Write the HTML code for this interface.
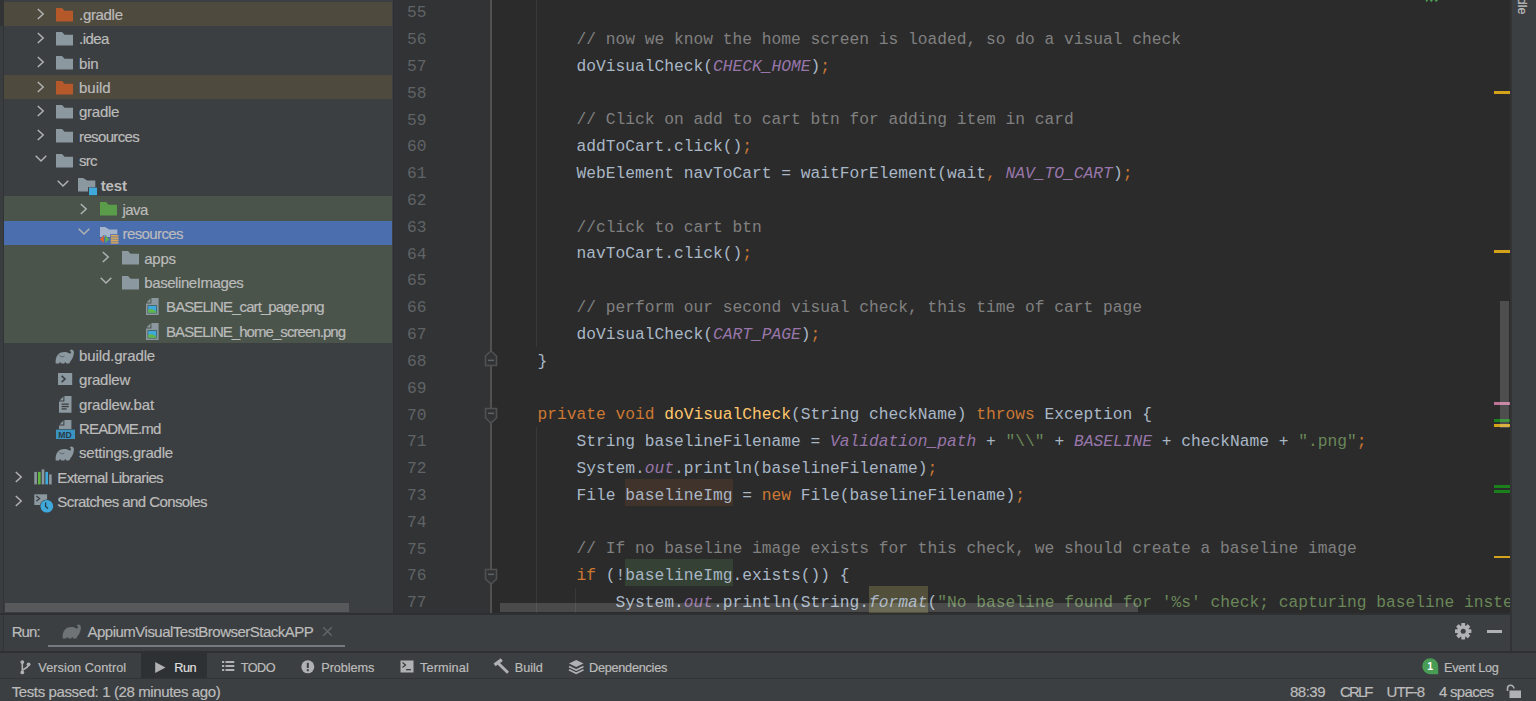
<!DOCTYPE html><html><head><meta charset="utf-8"><style>
html,body{margin:0;padding:0;}
body{width:1536px;height:701px;overflow:hidden;position:relative;background:#3C3F41;font-family:"Liberation Sans",sans-serif;}
.r{position:absolute;}
.t{position:absolute;white-space:pre;line-height:16px;-webkit-text-stroke:0.2px currentColor;}
.code{position:absolute;white-space:pre;font-family:"Liberation Mono",monospace;font-size:16.25px;line-height:26.82px;color:#A9B7C6;}
.k{color:#CC7832}.c{color:#808080}.s{color:#6A8759}.f{color:#9876AA;font-style:italic}.m{color:#FFC66D}.i{font-style:italic}
</style></head><body>

<div class="r" style="left:0.00px;top:0.00px;width:393.30px;height:614.00px;background:#3C3F41;"></div>
<div class="r" style="left:0.00px;top:0.00px;width:3.20px;height:651.00px;background:#3A3D3F;"></div>
<div class="r" style="left:0.00px;top:0.00px;width:3.20px;height:25.70px;background:#313335;"></div>
<div class="r" style="left:3.20px;top:0.00px;width:1.00px;height:651.00px;background:#323436;"></div>
<div class="r" style="left:4.20px;top:1.50px;width:387.90px;height:24.38px;background:#4E4A3E;"></div>
<div class="r" style="left:4.20px;top:74.58px;width:387.90px;height:24.38px;background:#4E4A3E;"></div>
<div class="r" style="left:4.20px;top:196.38px;width:387.90px;height:24.38px;background:#4A544A;"></div>
<div class="r" style="left:4.20px;top:220.74px;width:387.90px;height:24.38px;background:#4B6EAF;"></div>
<div class="r" style="left:4.20px;top:245.10px;width:387.90px;height:24.38px;background:#4A544A;"></div>
<div class="r" style="left:4.20px;top:269.46px;width:387.90px;height:24.38px;background:#4A544A;"></div>
<div class="r" style="left:4.20px;top:293.82px;width:387.90px;height:24.38px;background:#4A544A;"></div>
<div class="r" style="left:4.20px;top:318.18px;width:387.90px;height:24.38px;background:#4A544A;"></div>
<svg class="r" style="left:35.85px;top:6.68px" width="10.00" height="14.00" viewBox="0 0 10.00 14.00"><polyline points="1.8,2 7.2,7 1.8,12" fill="none" stroke="#AFB1B3" stroke-width="1.5"/></svg>
<svg class="r" style="left:56.40px;top:7.58px" width="18.00" height="14.00" viewBox="0 0 18.00 14.00"><path d="M0 0 H6 L8.6 2.7 H17 V13.4 H0 Z" fill="#B5592B"/></svg>
<div class="t" style="left:79.05px;top:6.98px;font-size:15.00px;color:#BBBBBB;letter-spacing:-0.323px;">.gradle</div>
<svg class="r" style="left:35.85px;top:31.04px" width="10.00" height="14.00" viewBox="0 0 10.00 14.00"><polyline points="1.8,2 7.2,7 1.8,12" fill="none" stroke="#AFB1B3" stroke-width="1.5"/></svg>
<svg class="r" style="left:56.40px;top:31.94px" width="18.00" height="14.00" viewBox="0 0 18.00 14.00"><path d="M0 0 H6 L8.6 2.7 H17 V13.4 H0 Z" fill="#8C98A0"/></svg>
<div class="t" style="left:79.05px;top:31.34px;font-size:15.00px;color:#BBBBBB;letter-spacing:-0.585px;">.idea</div>
<svg class="r" style="left:35.85px;top:55.40px" width="10.00" height="14.00" viewBox="0 0 10.00 14.00"><polyline points="1.8,2 7.2,7 1.8,12" fill="none" stroke="#AFB1B3" stroke-width="1.5"/></svg>
<svg class="r" style="left:56.40px;top:56.30px" width="18.00" height="14.00" viewBox="0 0 18.00 14.00"><path d="M0 0 H6 L8.6 2.7 H17 V13.4 H0 Z" fill="#8C98A0"/></svg>
<div class="t" style="left:79.05px;top:55.70px;font-size:15.00px;color:#BBBBBB;letter-spacing:-0.205px;">bin</div>
<svg class="r" style="left:35.85px;top:79.76px" width="10.00" height="14.00" viewBox="0 0 10.00 14.00"><polyline points="1.8,2 7.2,7 1.8,12" fill="none" stroke="#AFB1B3" stroke-width="1.5"/></svg>
<svg class="r" style="left:56.40px;top:80.66px" width="18.00" height="14.00" viewBox="0 0 18.00 14.00"><path d="M0 0 H6 L8.6 2.7 H17 V13.4 H0 Z" fill="#B5592B"/></svg>
<div class="t" style="left:79.05px;top:80.06px;font-size:15.00px;color:#BBBBBB;letter-spacing:-0.038px;">build</div>
<svg class="r" style="left:35.85px;top:104.12px" width="10.00" height="14.00" viewBox="0 0 10.00 14.00"><polyline points="1.8,2 7.2,7 1.8,12" fill="none" stroke="#AFB1B3" stroke-width="1.5"/></svg>
<svg class="r" style="left:56.40px;top:105.02px" width="18.00" height="14.00" viewBox="0 0 18.00 14.00"><path d="M0 0 H6 L8.6 2.7 H17 V13.4 H0 Z" fill="#8C98A0"/></svg>
<div class="t" style="left:79.05px;top:104.42px;font-size:15.00px;color:#BBBBBB;letter-spacing:-0.282px;">gradle</div>
<svg class="r" style="left:35.85px;top:128.48px" width="10.00" height="14.00" viewBox="0 0 10.00 14.00"><polyline points="1.8,2 7.2,7 1.8,12" fill="none" stroke="#AFB1B3" stroke-width="1.5"/></svg>
<svg class="r" style="left:56.40px;top:129.38px" width="18.00" height="14.00" viewBox="0 0 18.00 14.00"><path d="M0 0 H6 L8.6 2.7 H17 V13.4 H0 Z" fill="#8C98A0"/></svg>
<div class="t" style="left:79.05px;top:128.78px;font-size:15.00px;color:#BBBBBB;letter-spacing:-0.639px;">resources</div>
<svg class="r" style="left:33.85px;top:154.24px" width="14.00" height="10.00" viewBox="0 0 14.00 10.00"><polyline points="1.7,1.8 7,7 12.3,1.8" fill="none" stroke="#AFB1B3" stroke-width="1.5"/></svg>
<svg class="r" style="left:56.40px;top:153.74px" width="18.00" height="14.00" viewBox="0 0 18.00 14.00"><path d="M0 0 H6 L8.6 2.7 H17 V13.4 H0 Z" fill="#8C98A0"/></svg>
<div class="t" style="left:79.05px;top:153.14px;font-size:15.00px;color:#BBBBBB;letter-spacing:-0.765px;">src</div>
<svg class="r" style="left:55.60px;top:178.60px" width="14.00" height="10.00" viewBox="0 0 14.00 10.00"><polyline points="1.7,1.8 7,7 12.3,1.8" fill="none" stroke="#AFB1B3" stroke-width="1.5"/></svg>
<svg class="r" style="left:76.80px;top:177.20px" width="20.00" height="12.00" viewBox="0 0 20.00 12.00"></svg>
<svg class="r" style="left:77.80px;top:177.90px" width="20.00" height="18.00" viewBox="0 0 20.00 18.00"><path d="M0 0 H5.2 L9.1 2.5 H17.3 V9.3 H10 V13.4 H0 Z" fill="#8C98A0"/><rect x="11" y="9.6" width="8" height="7.6" fill="#3FA9DB"/></svg>
<div class="t" style="left:100.80px;top:177.50px;font-size:15.00px;color:#BBBBBB;letter-spacing:-0.193px;font-weight:bold;-webkit-text-stroke:0;">test</div>
<svg class="r" style="left:79.35px;top:201.56px" width="10.00" height="14.00" viewBox="0 0 10.00 14.00"><polyline points="1.8,2 7.2,7 1.8,12" fill="none" stroke="#AFB1B3" stroke-width="1.5"/></svg>
<svg class="r" style="left:99.90px;top:202.46px" width="18.00" height="14.00" viewBox="0 0 18.00 14.00"><path d="M0 0 H6 L8.6 2.7 H17 V13.4 H0 Z" fill="#5A9C49"/></svg>
<div class="t" style="left:122.55px;top:201.86px;font-size:15.00px;color:#BBBBBB;letter-spacing:-0.604px;">java</div>
<svg class="r" style="left:77.35px;top:227.32px" width="14.00" height="10.00" viewBox="0 0 14.00 10.00"><polyline points="1.7,1.8 7,7 12.3,1.8" fill="none" stroke="#AFB1B3" stroke-width="1.5"/></svg>
<svg class="r" style="left:98.55px;top:226.62px" width="21.00" height="18.00" viewBox="0 0 21.00 18.00"><path d="M1 0 H6.2 L10.1 2.5 H18.3 V7.2 H11 V10 H1 Z" fill="#A3B3CB"/><path d="M5 8 L0.7 12.2 L5 16.4 Z" fill="#E5622A" stroke="#4B6EAF" stroke-width="0.5"/><path d="M6 8 L10.3 12.2 L6 16.4 Z" fill="#5FB347" stroke="#4B6EAF" stroke-width="0.5"/><rect x="11.8" y="8" width="7.6" height="8.4" fill="#8A8F8F"/><rect x="11.8" y="8" width="7.6" height="1.3" fill="#D9A35A"/><rect x="11.8" y="10.6" width="7.6" height="1.3" fill="#D9A35A"/><rect x="11.8" y="12.8" width="7.6" height="1.3" fill="#D9A35A"/><rect x="11.8" y="15.3" width="7.6" height="1.3" fill="#D9A35A"/></svg>
<div class="t" style="left:122.55px;top:226.22px;font-size:15.00px;color:#BBBBBB;letter-spacing:-0.606px;">resources</div>
<svg class="r" style="left:101.10px;top:250.28px" width="10.00" height="14.00" viewBox="0 0 10.00 14.00"><polyline points="1.8,2 7.2,7 1.8,12" fill="none" stroke="#AFB1B3" stroke-width="1.5"/></svg>
<svg class="r" style="left:121.65px;top:251.18px" width="18.00" height="14.00" viewBox="0 0 18.00 14.00"><path d="M0 0 H6 L8.6 2.7 H17 V13.4 H0 Z" fill="#8C98A0"/></svg>
<div class="t" style="left:144.30px;top:250.58px;font-size:15.00px;color:#BBBBBB;letter-spacing:-0.281px;">apps</div>
<svg class="r" style="left:99.10px;top:276.04px" width="14.00" height="10.00" viewBox="0 0 14.00 10.00"><polyline points="1.7,1.8 7,7 12.3,1.8" fill="none" stroke="#AFB1B3" stroke-width="1.5"/></svg>
<svg class="r" style="left:121.65px;top:275.54px" width="18.00" height="14.00" viewBox="0 0 18.00 14.00"><path d="M0 0 H6 L8.6 2.7 H17 V13.4 H0 Z" fill="#8C98A0"/></svg>
<div class="t" style="left:144.30px;top:274.94px;font-size:15.00px;color:#BBBBBB;letter-spacing:-0.426px;">baselineImages</div>
<svg class="r" style="left:146.35px;top:298.40px" width="14.00" height="18.00" viewBox="0 0 14.00 18.00"><path d="M5.4 0 H12.6 V17 H0 V5.4 H5.4 Z" fill="#8C98A0"/><path d="M4.4 0.6 V4.4 H0.6 Z" fill="#8C98A0"/><rect x="1.6" y="7.2" width="9.4" height="8.2" fill="#3B4A45"/><rect x="2.2" y="7.8" width="8.2" height="7" fill="#3FA9DB"/><path d="M2.2 14.8 V12 Q5 10 10.4 13.4 V14.8 Z" fill="#62B543"/></svg>
<div class="t" style="left:166.05px;top:299.30px;font-size:15.00px;color:#BBBBBB;letter-spacing:-0.910px;">BASELINE_cart_page.png</div>
<svg class="r" style="left:146.35px;top:322.76px" width="14.00" height="18.00" viewBox="0 0 14.00 18.00"><path d="M5.4 0 H12.6 V17 H0 V5.4 H5.4 Z" fill="#8C98A0"/><path d="M4.4 0.6 V4.4 H0.6 Z" fill="#8C98A0"/><rect x="1.6" y="7.2" width="9.4" height="8.2" fill="#3B4A45"/><rect x="2.2" y="7.8" width="8.2" height="7" fill="#3FA9DB"/><path d="M2.2 14.8 V12 Q5 10 10.4 13.4 V14.8 Z" fill="#62B543"/></svg>
<div class="t" style="left:166.05px;top:323.66px;font-size:15.00px;color:#BBBBBB;letter-spacing:-0.949px;">BASELINE_home_screen.png</div>
<svg class="r" style="left:54.55px;top:348.52px" width="20.00" height="16.00" viewBox="0 0 20.00 16.00"><path d="M0.7 14.5 C0.4 10 1.6 5 6 3.6 C9 2.6 12 3 14 4.3 C14.9 4.7 15.8 4.4 16.1 3.7 C16.3 3.1 15.8 2.6 15.3 2.6 C14.6 1.4 15.4 0.6 16.5 0.6 C18.6 0.7 19.4 3 18.6 6 C17.9 9 16.6 10.8 15.6 12 L14.2 14.5 L11.3 14.5 C11 13.2 9.9 12.8 9.3 14.5 L6.3 14.5 C6 13.2 4.7 12.8 4.1 14.5 Z" fill="#8C98A0"/><path d="M4.5 6 C5.5 8 7 8.5 9.5 7" fill="none" stroke="#3C3F41" stroke-width="0.8" opacity="0.7"/></svg>
<div class="t" style="left:79.05px;top:348.02px;font-size:15.00px;color:#BBBBBB;letter-spacing:-0.129px;">build.gradle</div>
<svg class="r" style="left:57.65px;top:373.28px" width="15.00" height="13.00" viewBox="0 0 15.00 13.00"><rect x="0" y="0" width="14.2" height="12" fill="#8C98A0"/><polyline points="3.6,2.8 7,6 3.6,9.2" fill="none" stroke="#3C3F41" stroke-width="1.6"/></svg>
<div class="t" style="left:79.05px;top:372.38px;font-size:15.00px;color:#BBBBBB;letter-spacing:-0.218px;">gradlew</div>
<svg class="r" style="left:58.75px;top:396.04px" width="13.00" height="17.00" viewBox="0 0 13.00 17.00"><path d="M5.4 0 H12.5 V16.8 H0 V5.4 H5.4 Z" fill="#8C98A0"/><path d="M4.4 0.6 V4.4 H0.6 Z" fill="#8C98A0"/><rect x="2.6" y="7.5" width="7.2" height="1.3" fill="#3C3F41"/><rect x="2.6" y="9.9" width="7.2" height="1.3" fill="#3C3F41"/><rect x="2.6" y="12.3" width="5" height="1.3" fill="#3C3F41"/></svg>
<div class="t" style="left:79.05px;top:396.74px;font-size:15.00px;color:#BBBBBB;letter-spacing:-0.165px;">gradlew.bat</div>
<svg class="r" style="left:55.75px;top:420.00px" width="20.00" height="19.00" viewBox="0 0 20.00 19.00"><path d="M8.4 0 H15.4 V9 H3 V5.4 H8.4 Z" fill="#8C98A0"/><path d="M7.4 0.6 V4.4 H3.6 Z" fill="#8C98A0"/><rect x="0" y="9.6" width="19" height="9.4" fill="#3A93C0"/><text x="2.3" y="17.6" font-family="Liberation Sans" font-size="8.6" font-weight="bold" fill="#2B3A45">MD</text></svg>
<div class="t" style="left:79.05px;top:421.10px;font-size:15.00px;color:#BBBBBB;letter-spacing:-0.876px;">README.md</div>
<svg class="r" style="left:54.55px;top:445.96px" width="20.00" height="16.00" viewBox="0 0 20.00 16.00"><path d="M0.7 14.5 C0.4 10 1.6 5 6 3.6 C9 2.6 12 3 14 4.3 C14.9 4.7 15.8 4.4 16.1 3.7 C16.3 3.1 15.8 2.6 15.3 2.6 C14.6 1.4 15.4 0.6 16.5 0.6 C18.6 0.7 19.4 3 18.6 6 C17.9 9 16.6 10.8 15.6 12 L14.2 14.5 L11.3 14.5 C11 13.2 9.9 12.8 9.3 14.5 L6.3 14.5 C6 13.2 4.7 12.8 4.1 14.5 Z" fill="#8C98A0"/><path d="M4.5 6 C5.5 8 7 8.5 9.5 7" fill="none" stroke="#3C3F41" stroke-width="0.8" opacity="0.7"/></svg>
<div class="t" style="left:79.05px;top:445.46px;font-size:15.00px;color:#BBBBBB;letter-spacing:-0.250px;">settings.gradle</div>
<svg class="r" style="left:14.10px;top:469.52px" width="10.00" height="14.00" viewBox="0 0 10.00 14.00"><polyline points="1.8,2 7.2,7 1.8,12" fill="none" stroke="#AFB1B3" stroke-width="1.5"/></svg>
<svg class="r" style="left:33.80px;top:468.52px" width="19.00" height="16.00" viewBox="0 0 19.00 16.00"><rect x="0.3" y="2.9" width="2.6" height="12.5" fill="#8C98A0"/><rect x="4" y="2.9" width="2.6" height="12.5" fill="#62B543"/><rect x="7.7" y="0.4" width="2.6" height="15" fill="#8C98A0"/><rect x="11.4" y="2.9" width="2.6" height="12.5" fill="#3FA9DB"/><rect x="15.1" y="5.4" width="2.6" height="10" fill="#8C98A0"/></svg>
<div class="t" style="left:57.30px;top:469.82px;font-size:15.00px;color:#BBBBBB;letter-spacing:-0.612px;">External Libraries</div>
<svg class="r" style="left:14.10px;top:493.88px" width="10.00" height="14.00" viewBox="0 0 10.00 14.00"><polyline points="1.8,2 7.2,7 1.8,12" fill="none" stroke="#AFB1B3" stroke-width="1.5"/></svg>
<svg class="r" style="left:33.80px;top:493.58px" width="21.00" height="20.00" viewBox="0 0 21.00 20.00"><rect x="0.3" y="0.3" width="12.8" height="10.7" fill="#8C98A0"/><polyline points="2.3,2 5.6,4.6 2.3,7.2" fill="none" stroke="#3C3F41" stroke-width="1.3"/><circle cx="12.8" cy="12.3" r="6.9" fill="#3C3F41"/><circle cx="12.8" cy="12.3" r="6.3" fill="#3FA9DB"/><path d="M11.6 8.6 V12.5 L14 14.6" fill="none" stroke="#2B3A45" stroke-width="1.3"/></svg>
<div class="t" style="left:57.30px;top:494.18px;font-size:15.00px;color:#BBBBBB;letter-spacing:-0.586px;">Scratches and Consoles</div>
<div class="r" style="left:5.40px;top:603.30px;width:344.00px;height:8.80px;background:#58595A;"></div>
<div class="r" style="left:393.30px;top:0.00px;width:1.00px;height:613.00px;background:#2E3032;"></div>
<div class="r" style="left:394.30px;top:0.00px;width:1115.70px;height:612.80px;background:#2B2B2B;"></div>
<div class="r" style="left:394.30px;top:0.00px;width:95.70px;height:612.80px;background:#313335;"></div>
<div class="r" style="left:490.00px;top:0.00px;width:2.20px;height:612.80px;background:#515151;"></div>
<div class="code" style="left:366.50px;top:0.35px;width:60px;text-align:right;color:#606366">55</div>
<div class="code" style="left:366.50px;top:27.15px;width:60px;text-align:right;color:#606366">56</div>
<div class="code" style="left:366.50px;top:53.97px;width:60px;text-align:right;color:#606366">57</div>
<div class="code" style="left:366.50px;top:80.77px;width:60px;text-align:right;color:#606366">58</div>
<div class="code" style="left:366.50px;top:107.58px;width:60px;text-align:right;color:#606366">59</div>
<div class="code" style="left:366.50px;top:134.39px;width:60px;text-align:right;color:#606366">60</div>
<div class="code" style="left:366.50px;top:161.20px;width:60px;text-align:right;color:#606366">61</div>
<div class="code" style="left:366.50px;top:188.01px;width:60px;text-align:right;color:#606366">62</div>
<div class="code" style="left:366.50px;top:214.82px;width:60px;text-align:right;color:#606366">63</div>
<div class="code" style="left:366.50px;top:241.63px;width:60px;text-align:right;color:#606366">64</div>
<div class="code" style="left:366.50px;top:268.44px;width:60px;text-align:right;color:#606366">65</div>
<div class="code" style="left:366.50px;top:295.25px;width:60px;text-align:right;color:#606366">66</div>
<div class="code" style="left:366.50px;top:322.06px;width:60px;text-align:right;color:#606366">67</div>
<div class="code" style="left:366.50px;top:348.88px;width:60px;text-align:right;color:#606366">68</div>
<div class="code" style="left:366.50px;top:375.69px;width:60px;text-align:right;color:#606366">69</div>
<div class="code" style="left:366.50px;top:402.50px;width:60px;text-align:right;color:#606366">70</div>
<div class="code" style="left:366.50px;top:429.31px;width:60px;text-align:right;color:#606366">71</div>
<div class="code" style="left:366.50px;top:456.12px;width:60px;text-align:right;color:#606366">72</div>
<div class="code" style="left:366.50px;top:482.93px;width:60px;text-align:right;color:#606366">73</div>
<div class="code" style="left:366.50px;top:509.73px;width:60px;text-align:right;color:#606366">74</div>
<div class="code" style="left:366.50px;top:536.54px;width:60px;text-align:right;color:#606366">75</div>
<div class="code" style="left:366.50px;top:563.36px;width:60px;text-align:right;color:#606366">76</div>
<div class="code" style="left:366.50px;top:590.16px;width:60px;text-align:right;color:#606366">77</div>
<div class="r" style="left:625.25px;top:479.03px;width:107.25px;height:26.81px;background:#40332B;"></div>
<div class="r" style="left:625.25px;top:559.45px;width:107.25px;height:26.81px;background:#344134;"></div>
<div class="r" style="left:869.00px;top:586.26px;width:58.50px;height:26.81px;background:#52503A;"></div>
<div class="r" style="left:535.50px;top:0.00px;width:1.00px;height:346.67px;background:#393939;"></div>
<div class="r" style="left:535.50px;top:427.11px;width:1.00px;height:185.69px;background:#393939;"></div>
<div class="r" style="left:574.50px;top:587.96px;width:1.00px;height:24.84px;background:#393939;"></div>
<div class="code" style="left:537.50px;top:26.95px">    <span class="c">// now we know the home screen is loaded, so do a visual check</span></div>
<div class="code" style="left:537.50px;top:53.77px">    doVisualCheck(<span class="f">CHECK_HOME</span>)<span class="k">;</span></div>
<div class="code" style="left:537.50px;top:107.38px">    <span class="c">// Click on add to cart btn for adding item in card</span></div>
<div class="code" style="left:537.50px;top:134.19px">    addToCart.click()<span class="k">;</span></div>
<div class="code" style="left:537.50px;top:161.00px">    WebElement navToCart = waitForElement(wait<span class="k">, </span><span class="f">NAV_TO_CART</span>)<span class="k">;</span></div>
<div class="code" style="left:537.50px;top:214.62px">    <span class="c">//click to cart btn</span></div>
<div class="code" style="left:537.50px;top:241.44px">    navToCart.click()<span class="k">;</span></div>
<div class="code" style="left:537.50px;top:295.06px">    <span class="c">// perform our second visual check, this time of cart page</span></div>
<div class="code" style="left:537.50px;top:321.87px">    doVisualCheck(<span class="f">CART_PAGE</span>)<span class="k">;</span></div>
<div class="code" style="left:537.50px;top:348.68px">}</div>
<div class="code" style="left:537.50px;top:402.30px"><span class="k">private void </span><span class="m">doVisualCheck</span>(String checkName) <span class="k">throws </span>Exception {</div>
<div class="code" style="left:537.50px;top:429.11px">    String baselineFilename = <span class="f">Validation_path</span> + <span class="s">"\\"</span> + <span class="f">BASELINE</span> + checkName + <span class="s">".png"</span><span class="k">;</span></div>
<div class="code" style="left:537.50px;top:455.92px">    System.<span class="f">out</span>.println(baselineFilename)<span class="k">;</span></div>
<div class="code" style="left:537.50px;top:482.73px">    File baselineImg = <span class="k">new </span>File(baselineFilename)<span class="k">;</span></div>
<div class="code" style="left:537.50px;top:536.34px">    <span class="c">// If no baseline image exists for this check, we should create a baseline image</span></div>
<div class="code" style="left:537.50px;top:563.15px">    <span class="k">if </span>(!baselineImg.exists()) {</div>
<div class="code" style="left:537.50px;top:589.96px">        System.<span class="f">out</span>.println(String.<span class="i">format</span>(<span class="s">"No baseline found for '%s' check; capturing baseline instead"</span></div>
<svg class="r" style="left:484.00px;top:350.08px" width="14.00" height="17.00" viewBox="0 0 14.00 17.00"><path d="M1.5 15.5 V6 L7 1 L12.5 6 V15.5 Z" fill="#313335" stroke="#515151" stroke-width="1.6"/><rect x="4" y="9.6" width="6" height="1.5" fill="#606366"/></svg>
<svg class="r" style="left:484.00px;top:406.70px" width="14.00" height="17.00" viewBox="0 0 14.00 17.00"><path d="M1.5 1.5 V11 L7 16 L12.5 11 V1.5 Z" fill="#313335" stroke="#515151" stroke-width="1.6"/><rect x="4" y="5.6" width="6" height="1.5" fill="#606366"/></svg>
<svg class="r" style="left:484.00px;top:567.56px" width="14.00" height="17.00" viewBox="0 0 14.00 17.00"><path d="M1.5 1.5 V11 L7 16 L12.5 11 V1.5 Z" fill="#313335" stroke="#515151" stroke-width="1.6"/><rect x="4" y="5.6" width="6" height="1.5" fill="#606366"/></svg>
<div class="r" style="left:500.00px;top:603.20px;width:638.00px;height:9.20px;background:rgba(255,255,255,0.15);"></div>
<div class="r" style="left:1494.00px;top:91.00px;width:16.00px;height:2.50px;background:#D4A21B;"></div>
<div class="r" style="left:1494.00px;top:250.00px;width:16.00px;height:2.50px;background:#D4A21B;"></div>
<div class="r" style="left:1494.00px;top:402.10px;width:16.00px;height:2.50px;background:#BE7296;"></div>
<div class="r" style="left:1494.00px;top:419.20px;width:16.00px;height:2.50px;background:#1A801A;"></div>
<div class="r" style="left:1494.00px;top:424.20px;width:16.00px;height:2.50px;background:#D4A21B;"></div>
<div class="r" style="left:1494.00px;top:485.00px;width:16.00px;height:2.50px;background:#1A801A;"></div>
<div class="r" style="left:1494.00px;top:490.00px;width:16.00px;height:2.50px;background:#1A801A;"></div>
<div class="r" style="left:1494.00px;top:555.50px;width:16.00px;height:2.50px;background:#D4A21B;"></div>
<div class="r" style="left:1499.50px;top:301.30px;width:9.70px;height:126.50px;background:rgba(255,255,255,0.17);"></div>
<svg class="r" style="left:1424.00px;top:0.00px" width="16.00" height="4.00" viewBox="0 0 16.00 4.00"><path d="M1.5 0 L4.2 0 L2.6 2.2 Z" fill="#4A9C55"/><path d="M5.6 0 L9 0 L7.3 2.3 Z" fill="#4A9C55"/><path d="M10.5 0 L14 0 L12.2 2.3 Z" fill="#4A9C55"/></svg>
<div class="r" style="left:1510.00px;top:0.00px;width:2.00px;height:652.00px;background:#313335;"></div>
<div class="r" style="left:1512.00px;top:0.00px;width:24.00px;height:652.00px;background:#3C3F41;"></div>
<div class="t" style="left:1530px;top:-23px;font-size:12.5px;color:#BBBBBB;transform-origin:0 0;transform:rotate(90deg);">Gradle</div>
<div class="r" style="left:0.00px;top:612.80px;width:1510.00px;height:2.20px;background:#2E3032;"></div>
<div class="r" style="left:4.20px;top:615.00px;width:1505.80px;height:36.20px;background:#3C3F41;"></div>
<div class="t" style="left:11.70px;top:623.80px;font-size:15.00px;color:#BBBBBB;letter-spacing:-0.896px;">Run:</div>
<svg class="r" style="left:62.00px;top:623.50px" width="20.00" height="16.00" viewBox="0 0 20.00 16.00"><path d="M0.7 14.5 C0.4 10 1.6 5 6 3.6 C9 2.6 12 3 14 4.3 C14.9 4.7 15.8 4.4 16.1 3.7 C16.3 3.1 15.8 2.6 15.3 2.6 C14.6 1.4 15.4 0.6 16.5 0.6 C18.6 0.7 19.4 3 18.6 6 C17.9 9 16.6 10.8 15.6 12 L14.2 14.5 L11.3 14.5 C11 13.2 9.9 12.8 9.3 14.5 L6.3 14.5 C6 13.2 4.7 12.8 4.1 14.5 Z" fill="#6E7376"/></svg>
<div class="t" style="left:87.50px;top:623.80px;font-size:15.00px;color:#BBBBBB;letter-spacing:-0.506px;">AppiumVisualTestBrowserStackAPP</div>
<svg class="r" style="left:321.50px;top:626.00px" width="12.00" height="12.00" viewBox="0 0 12.00 12.00"><path d="M1.2 1.2 L9.8 9.8 M9.8 1.2 L1.2 9.8" stroke="#63676A" stroke-width="1.3"/></svg>
<div class="r" style="left:48.30px;top:644.70px;width:296.50px;height:2.80px;background:#747A80;"></div>
<svg class="r" style="left:1454.50px;top:622.50px" width="17.00" height="17.00" viewBox="0 0 17.00 17.00"><g transform="translate(8.2 8.2)" fill="#AFB1B3"><circle r="6"/><rect x="-1.9" y="-8.2" width="3.8" height="4" rx="0.6" transform="rotate(0)"/><rect x="-1.9" y="-8.2" width="3.8" height="4" rx="0.6" transform="rotate(45)"/><rect x="-1.9" y="-8.2" width="3.8" height="4" rx="0.6" transform="rotate(90)"/><rect x="-1.9" y="-8.2" width="3.8" height="4" rx="0.6" transform="rotate(135)"/><rect x="-1.9" y="-8.2" width="3.8" height="4" rx="0.6" transform="rotate(180)"/><rect x="-1.9" y="-8.2" width="3.8" height="4" rx="0.6" transform="rotate(225)"/><rect x="-1.9" y="-8.2" width="3.8" height="4" rx="0.6" transform="rotate(270)"/><rect x="-1.9" y="-8.2" width="3.8" height="4" rx="0.6" transform="rotate(315)"/><circle r="2.5" fill="#3C3F41"/></g></svg>
<div class="r" style="left:1487.20px;top:629.60px;width:14.80px;height:3.00px;background:#AFB1B3;"></div>
<div class="r" style="left:0.00px;top:651.20px;width:1536.00px;height:1.80px;background:#2E3032;"></div>
<div class="r" style="left:0.00px;top:653.00px;width:1536.00px;height:25.50px;background:#3C3F41;"></div>
<div class="r" style="left:141.40px;top:653.00px;width:65.60px;height:25.00px;background:#2E3133;"></div>
<div class="t" style="left:38.30px;top:660.10px;font-size:12.70px;color:#BBBBBB;letter-spacing:0.078px;">Version Control</div>
<svg class="r" style="left:18.00px;top:658.50px" width="14.00" height="16.00" viewBox="0 0 14.00 16.00"><circle cx="4.3" cy="3.1" r="1.9" fill="#AFB1B3"/><circle cx="4.3" cy="13.4" r="1.9" fill="#AFB1B3"/><circle cx="10.6" cy="5.3" r="1.9" fill="#AFB1B3"/><path d="M4.3 3 V13.4 M10.6 5.3 C10.6 9.2 6 9.2 4.3 11.5" fill="none" stroke="#AFB1B3" stroke-width="1.6"/></svg>
<svg class="r" style="left:153.50px;top:660.50px" width="13.00" height="13.00" viewBox="0 0 13.00 13.00"><path d="M1.2 1 L11.5 6.5 L1.2 12 Z" fill="#AFB1B3"/></svg>
<div class="t" style="left:174.20px;top:660.10px;font-size:12.70px;color:#DFDFDF;letter-spacing:-0.466px;">Run</div>
<svg class="r" style="left:221.00px;top:660.00px" width="15.00" height="13.00" viewBox="0 0 15.00 13.00"><rect x="1" y="1.0" width="2.2" height="2" fill="#AFB1B3"/><rect x="4.5" y="1.0" width="8.8" height="2" fill="#AFB1B3"/><rect x="1" y="5.0" width="2.2" height="2" fill="#AFB1B3"/><rect x="4.5" y="5.0" width="8.8" height="2" fill="#AFB1B3"/><rect x="1" y="9.0" width="2.2" height="2" fill="#AFB1B3"/><rect x="4.5" y="9.0" width="8.8" height="2" fill="#AFB1B3"/></svg>
<div class="t" style="left:240.70px;top:660.10px;font-size:12.70px;color:#BBBBBB;letter-spacing:-0.489px;">TODO</div>
<svg class="r" style="left:301.20px;top:659.50px" width="14.00" height="14.00" viewBox="0 0 14.00 14.00"><circle cx="6.8" cy="6.8" r="6.5" fill="#AFB1B3"/><rect x="5.8" y="2.8" width="2" height="5.2" fill="#3C3F41"/><rect x="5.8" y="9.2" width="2" height="2" fill="#3C3F41"/></svg>
<div class="t" style="left:321.30px;top:660.10px;font-size:12.70px;color:#BBBBBB;letter-spacing:-0.092px;">Problems</div>
<svg class="r" style="left:399.50px;top:659.50px" width="14.00" height="13.00" viewBox="0 0 14.00 13.00"><rect x="0.5" y="0.5" width="13" height="12" fill="#AFB1B3"/><polyline points="2.5,2.5 5.5,5 2.5,7.5" fill="none" stroke="#3C3F41" stroke-width="1.3"/><rect x="6" y="9" width="5" height="1.3" fill="#3C3F41"/></svg>
<div class="t" style="left:420.00px;top:660.10px;font-size:12.70px;color:#BBBBBB;letter-spacing:0.114px;">Terminal</div>
<svg class="r" style="left:492.00px;top:658.00px" width="18.00" height="17.00" viewBox="0 0 18.00 17.00"><path d="M2.6 6.8 L9.8 1.6" stroke="#AFB1B3" stroke-width="3.4"/><path d="M6.5 5.5 L16 14.8" stroke="#AFB1B3" stroke-width="2.9"/></svg>
<div class="t" style="left:514.80px;top:660.10px;font-size:12.70px;color:#BBBBBB;letter-spacing:-0.048px;">Build</div>
<svg class="r" style="left:567.50px;top:659.00px" width="17.00" height="16.00" viewBox="0 0 17.00 16.00"><path d="M8.2 1 L15.5 4.5 L8.2 8 L1 4.5 Z" fill="#AFB1B3"/><path d="M1 7.5 L8.2 11 L15.5 7.5" fill="none" stroke="#AFB1B3" stroke-width="1.6"/><path d="M1 10.8 L8.2 14.3 L15.5 10.8" fill="none" stroke="#AFB1B3" stroke-width="1.6"/></svg>
<div class="t" style="left:589.00px;top:660.10px;font-size:12.70px;color:#BBBBBB;letter-spacing:-0.258px;">Dependencies</div>
<svg class="r" style="left:1422.00px;top:658.30px" width="17.00" height="17.00" viewBox="0 0 17.00 17.00"><path d="M0.3 8.15 A7.95 7.95 0 0 1 16.2 8.15 L16.2 16.3 L8.15 16.3 A7.95 7.95 0 0 1 0.3 8.15 Z" fill="#499C54"/><text x="5.3" y="12.4" font-family="Liberation Sans" font-size="10.5" font-weight="bold" fill="#FFFFFF">1</text></svg>
<div class="t" style="left:1444.00px;top:660.10px;font-size:12.70px;color:#BBBBBB;letter-spacing:-0.277px;">Event Log</div>
<div class="r" style="left:0.00px;top:678.30px;width:1536.00px;height:1.00px;background:#323436;"></div>
<div class="r" style="left:0.00px;top:679.30px;width:1536.00px;height:21.70px;background:#3C3F41;"></div>
<div class="t" style="left:11.70px;top:683.50px;font-size:15.00px;color:#BBBBBB;letter-spacing:-0.385px;">Tests passed: 1 (28 minutes ago)</div>
<div class="t" style="left:1290.00px;top:683.50px;font-size:15.00px;color:#BBBBBB;letter-spacing:-0.507px;">88:39</div>
<div class="t" style="left:1340.00px;top:683.50px;font-size:15.00px;color:#BBBBBB;letter-spacing:-1.892px;">CRLF</div>
<div class="t" style="left:1386.60px;top:683.50px;font-size:15.00px;color:#BBBBBB;letter-spacing:-0.978px;">UTF-8</div>
<div class="t" style="left:1438.90px;top:683.50px;font-size:15.00px;color:#BBBBBB;letter-spacing:-0.692px;">4 spaces</div>
<svg class="r" style="left:1505.00px;top:684.00px" width="18.00" height="15.00" viewBox="0 0 18.00 15.00"><path d="M2.5 7 V4.5 A3.2 3.2 0 0 1 8.9 4.5" fill="none" stroke="#AFB1B3" stroke-width="1.6"/><rect x="4.5" y="6.5" width="11.5" height="7.5" fill="#AFB1B3"/></svg>
</body></html>
